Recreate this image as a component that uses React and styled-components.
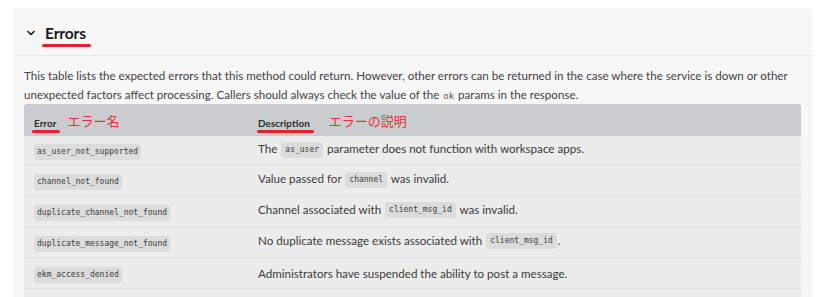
import React from 'react'
import styled, { createGlobalStyle } from 'styled-components'

const GlobalStyle = createGlobalStyle`
  body {
    margin: 0;
    background: #ffffff;
    font-family: Lato, "Noto Sans", "Noto Sans CJK JP", sans-serif;
  }
`

const errors = [
  { code: 'as_user_not_supported', desc: ['The ', { c: 'as_user' }, ' parameter does not function with workspace apps.'] },
  { code: 'channel_not_found', desc: ['Value passed for ', { c: 'channel' }, ' was invalid.'] },
  { code: 'duplicate_channel_not_found', desc: ['Channel associated with ', { c: 'client_msg_id' }, ' was invalid.'] },
  { code: 'duplicate_message_not_found', desc: ['No duplicate message exists associated with ', { c: 'client_msg_id' }, '.'] },
  { code: 'ekm_access_denied', desc: ['Administrators have suspended the ability to post a message.'] },
]

const Panel = styled.section`
  margin: 8px 0 0 13px;
  width: 799px;
  height: 289px;
  background: #f7f7f7;
  border-radius: 3px 3px 0 0;
  overflow: hidden;
`

const Header = styled.div`
  height: 48px;
  display: flex;
  align-items: center;
  gap: 9px;
  padding: 2px 0 0 13px;
  box-sizing: border-box;
  border-bottom: 1px solid #e9e9e9;
`

const Chevron = styled.svg`
  width: 10px;
  height: 10px;
  margin-top: 1px;
`

const Marked = styled.span`
  position: relative;
  display: inline-block;
  &::after {
    content: '';
    position: absolute;
    left: ${(p) => p.$l}px;
    right: ${(p) => p.$r}px;
    bottom: ${(p) => p.$b}px;
    height: 3px;
    border-radius: 2px;
    background: #e3232b;
  }
`

const Title = styled.h2`
  margin: 0;
  font-size: 15.5px;
  font-weight: 700;
  color: #1d1c1d;
  letter-spacing: -0.1px;
`

const Body = styled.div`
  padding: 10px 11px 0;
`

const Intro = styled.p`
  margin: 0;
  font-size: 11.6px;
  line-height: 19px;
  color: #454245;
`

const Ok = styled.span`
  display: inline-block;
  font-family: "DejaVu Sans Mono", monospace;
  font-size: 9px;
  line-height: 12px;
  margin: 0 1px;
  color: #555;
`

const Table = styled.div`
  border-radius: 3px 3px 0 0;
  overflow: hidden;
`

const HeadRow = styled.div`
  display: grid;
  grid-template-columns: 224px 1fr;
  height: 32px;
  align-items: center;
  background: #cbcccf;
  padding: 0 0 0 10px;
`

const HeadCell = styled.div`
  display: flex;
  align-items: center;
  gap: ${(p) => p.$gap}px;
`

const HeadLabel = styled.span`
  font-size: 10px;
  font-weight: 700;
  color: #2c2c2c;
  margin-top: -2px;
`

const Note = styled.span`
  font-family: "Noto Sans CJK JP", sans-serif;
  font-size: 13px;
  color: #e3323a;
  margin-top: 1px;
`

const Row = styled.div`
  display: grid;
  grid-template-columns: 224px 1fr;
  height: ${(p) => p.$h}px;
  align-items: center;
  background: #ececec;
  border-bottom: 1px solid #dedede;
  box-sizing: border-box;
  padding: 0 0 0 10px;
`

const Code = styled.code`
  display: inline-block;
  font-family: "DejaVu Sans Mono", monospace;
  font-size: 8px;
  line-height: 16px;
  padding: 0 3px;
  border-radius: 3px;
  background: #dcdcdc;
  color: #3a3a3a;
  vertical-align: middle;
`

const Desc = styled.div`
  font-size: 11.6px;
  color: #3b3a3b;
  ${Code} {
    margin: 0 1px;
    padding: 0 4px;
    position: relative;
    top: -1px;
  }
`

const rowHeights = [30, 30, 31, 31, 31, 31]

const App = () => (
  <>
    <GlobalStyle />
    <Panel>
      <Header>
        <Chevron viewBox="0 0 10 10">
          <path d="M2 3.5 L5 6.5 L8 3.5" fill="none" stroke="#1d1c1d" strokeWidth="1.6" strokeLinecap="round" strokeLinejoin="round" />
        </Chevron>
        <Marked $l={-3} $r={-5} $b={-5}>
          <Title>Errors</Title>
        </Marked>
      </Header>
      <Body>
        <Intro>
          This table lists the expected errors that this method could return. However, other errors can be returned in the case where the service is down or other unexpected factors affect processing. Callers should always check the value of the <Ok>ok</Ok> params in the response.
        </Intro>
        <Table>
          <HeadRow>
            <HeadCell $gap={11}>
              <Marked $l={-2} $r={-4} $b={-3}>
                <HeadLabel>Error</HeadLabel>
              </Marked>
              <Note>エラー名</Note>
            </HeadCell>
            <HeadCell $gap={19}>
              <Marked $l={-1} $r={-4} $b={-3}>
                <HeadLabel>Description</HeadLabel>
              </Marked>
              <Note>エラーの説明</Note>
            </HeadCell>
          </HeadRow>
          {errors.map((e, i) => (
            <Row key={e.code} $h={rowHeights[i]}>
              <div>
                <Code>{e.code}</Code>
              </div>
              <Desc>
                {e.desc.map((d, j) => (typeof d === 'string' ? d : <Code key={j}>{d.c}</Code>))}
              </Desc>
            </Row>
          ))}
          <Row $h={31} />
        </Table>
      </Body>
    </Panel>
  </>
)

export default App
